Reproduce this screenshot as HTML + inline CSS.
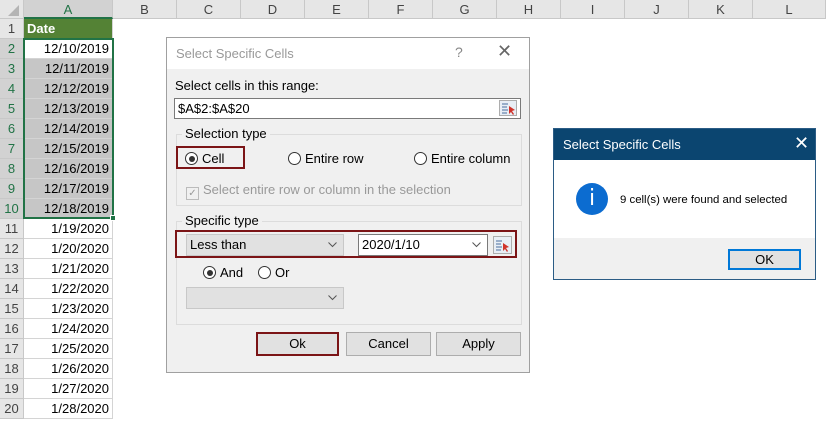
<!DOCTYPE html>
<html><head><style>
*{box-sizing:border-box;margin:0;padding:0}
body{width:826px;height:422px;overflow:hidden;background:#fff;font-family:"Liberation Sans",sans-serif;font-size:13px;position:relative;color:#000}
.a{position:absolute}
.ch{position:absolute;top:0;height:19px;background:#e6e6e6;border-right:1px solid #c8c8c8;border-bottom:1px solid #c8c8c8;text-align:center;line-height:19px;color:#444;font-size:13px}
.rh{position:absolute;left:0;width:24px;height:20px;background:#e6e6e6;border-bottom:1px solid #c8c8c8;border-right:1px solid #c8c8c8;text-align:center;line-height:20px;color:#444}
.cell{position:absolute;left:24px;width:89px;height:20px;border-bottom:1px solid #d4d4d4;border-right:1px solid #d4d4d4;text-align:right;padding-right:3px;line-height:20px}
.btn{position:absolute;background:#e1e1e1;border:1px solid #adadad;text-align:center;font-size:13px}
.rad{display:inline-block;width:13px;height:13px;border:1px solid #333;border-radius:50%;vertical-align:-2px;margin-right:4px;position:relative;background:#fff}
.rad.on::after{content:"";position:absolute;left:2.5px;top:2.5px;width:6px;height:6px;border-radius:50%;background:#333}
.ico{position:absolute;width:18px;height:16px;border:1px solid #adadad;background:#e8eef5}
.chev{position:absolute;right:6px;top:7px}
</style></head><body>
<div class="ch" style="left:0;width:24px"></div>
<div class="a" style="left:8px;top:5px;width:0;height:0;border-left:11px solid transparent;border-bottom:11px solid #b4b4b4"></div>
<div class="ch" style="left:24px;width:89px;background:#d2d2d2;color:#217346;border-bottom:2px solid #217346">A</div>
<div class="ch" style="left:113px;width:64px">B</div>
<div class="ch" style="left:177px;width:64px">C</div>
<div class="ch" style="left:241px;width:64px">D</div>
<div class="ch" style="left:305px;width:64px">E</div>
<div class="ch" style="left:369px;width:64px">F</div>
<div class="ch" style="left:433px;width:64px">G</div>
<div class="ch" style="left:497px;width:64px">H</div>
<div class="ch" style="left:561px;width:64px">I</div>
<div class="ch" style="left:625px;width:64px">J</div>
<div class="ch" style="left:689px;width:64px">K</div>
<div class="ch" style="left:753px;width:73px">L</div>
<div class="rh" style="top:19px">1</div><div class="cell" style="top:19px;background:#548235;color:#fff;font-weight:bold;text-align:left;padding-left:3px">Date</div>
<div class="rh" style="top:39px;background:#d2d2d2;color:#217346">2</div><div class="cell" style="top:39px">12/10/2019</div>
<div class="rh" style="top:59px;background:#d2d2d2;color:#217346">3</div><div class="cell" style="top:59px;background:#c6c6c6">12/11/2019</div>
<div class="rh" style="top:79px;background:#d2d2d2;color:#217346">4</div><div class="cell" style="top:79px;background:#c6c6c6">12/12/2019</div>
<div class="rh" style="top:99px;background:#d2d2d2;color:#217346">5</div><div class="cell" style="top:99px;background:#c6c6c6">12/13/2019</div>
<div class="rh" style="top:119px;background:#d2d2d2;color:#217346">6</div><div class="cell" style="top:119px;background:#c6c6c6">12/14/2019</div>
<div class="rh" style="top:139px;background:#d2d2d2;color:#217346">7</div><div class="cell" style="top:139px;background:#c6c6c6">12/15/2019</div>
<div class="rh" style="top:159px;background:#d2d2d2;color:#217346">8</div><div class="cell" style="top:159px;background:#c6c6c6">12/16/2019</div>
<div class="rh" style="top:179px;background:#d2d2d2;color:#217346">9</div><div class="cell" style="top:179px;background:#c6c6c6">12/17/2019</div>
<div class="rh" style="top:199px;background:#d2d2d2;color:#217346">10</div><div class="cell" style="top:199px;background:#c6c6c6">12/18/2019</div>
<div class="rh" style="top:219px">11</div><div class="cell" style="top:219px">1/19/2020</div>
<div class="rh" style="top:239px">12</div><div class="cell" style="top:239px">1/20/2020</div>
<div class="rh" style="top:259px">13</div><div class="cell" style="top:259px">1/21/2020</div>
<div class="rh" style="top:279px">14</div><div class="cell" style="top:279px">1/22/2020</div>
<div class="rh" style="top:299px">15</div><div class="cell" style="top:299px">1/23/2020</div>
<div class="rh" style="top:319px">16</div><div class="cell" style="top:319px">1/24/2020</div>
<div class="rh" style="top:339px">17</div><div class="cell" style="top:339px">1/25/2020</div>
<div class="rh" style="top:359px">18</div><div class="cell" style="top:359px">1/26/2020</div>
<div class="rh" style="top:379px">19</div><div class="cell" style="top:379px">1/27/2020</div>
<div class="rh" style="top:399px">20</div><div class="cell" style="top:399px">1/28/2020</div>
<div class="a" style="left:23px;top:38px;width:91px;height:181px;border:2px solid #217346"></div>
<div class="a" style="left:110px;top:215px;width:6px;height:6px;background:#217346;border:1px solid #fff"></div>

<div class="a" style="left:166px;top:37px;width:364px;height:336px;background:#f0f0f0;border:1px solid #a0a0a0">
  <div class="a" style="left:0;top:0;width:362px;height:31px;background:#fff;color:#999;line-height:31px;padding-left:9px">Select Specific Cells</div>
  <div class="a" style="left:288px;top:6px;color:#888;font-size:14px">?</div>
  <div class="a" style="left:330px;top:3px;color:#666;font-size:18px">✕</div>
  <div class="a" style="left:8px;top:40px">Select cells in this range:</div>
  <div class="a" style="left:7px;top:60px;width:347px;height:21px;background:#fff;border:1px solid #7a7a7a;line-height:19px;padding-left:3px">$A$2:$A$20</div>
  <svg class="a" style="left:332px;top:62px" width="18" height="16"><rect x=".5" y=".5" width="17" height="15" fill="#e8eef5" stroke="#adadad"/><path d="M3 4h6M3 7h5M3 10h6M3 13h5" stroke="#4a6ea0"/><path d="M10 6l6 4-3 1 2 3-1 1-2-3-2 2z" fill="#d0342c"/></svg>
  <div class="a" style="left:9px;top:96px;width:346px;height:72px;border:1px solid #dcdcdc"></div>
  <div class="a" style="left:15px;top:88px;background:#f0f0f0;padding:0 3px">Selection type</div>
  <div class="a" style="left:9px;top:108px;width:69px;height:23px;border:2px solid #7b1416"></div>
  <div class="a" style="left:18px;top:113px"><span class="rad on"></span>Cell</div>
  <div class="a" style="left:121px;top:113px"><span class="rad"></span>Entire row</div>
  <div class="a" style="left:247px;top:113px"><span class="rad"></span>Entire column</div>
  <div class="a" style="left:19px;top:144px;color:#999"><span style="display:inline-block;width:13px;height:13px;border:1px solid #bbb;vertical-align:-2px;margin-right:4px;font-size:10px;line-height:11px;text-align:center">✓</span>Select entire row or column in the selection</div>
  <div class="a" style="left:9px;top:183px;width:346px;height:104px;border:1px solid #dcdcdc"></div>
  <div class="a" style="left:15px;top:175px;background:#f0f0f0;padding:0 3px">Specific type</div>
  <div class="a" style="left:8px;top:192px;width:342px;height:28px;border:2px solid #7b1416"></div>
  <div class="a" style="left:19px;top:196px;width:158px;height:22px;background:#e1e1e1;border:1px solid #c8c8c8;line-height:20px;padding-left:3px">Less than<svg class="chev" width="9" height="6"><path d="M.5 .5l4 4 4-4" fill="none" stroke="#555"/></svg></div>
  <div class="a" style="left:191px;top:196px;width:130px;height:22px;background:#fff;border:1px solid #7a7a7a;line-height:20px;padding-left:3px">2020/1/10<svg class="chev" width="9" height="6"><path d="M.5 .5l4 4 4-4" fill="none" stroke="#555"/></svg></div>
  <svg class="a" style="left:326px;top:198px" width="19" height="18"><rect x=".5" y=".5" width="18" height="17" fill="#e8eef5" stroke="#adadad"/><path d="M3 5h6M3 8h5M3 11h6M3 14h5" stroke="#4a6ea0"/><path d="M10 7l6 4-3 1 2 3-1 1-2-3-2 2z" fill="#d0342c"/></svg>
  <div class="a" style="left:36px;top:227px"><span class="rad on"></span>And</div>
  <div class="a" style="left:91px;top:227px"><span class="rad"></span>Or</div>
  <div class="a" style="left:19px;top:249px;width:158px;height:22px;background:#e1e1e1;border:1px solid #c8c8c8"><svg class="chev" width="9" height="6"><path d="M.5 .5l4 4 4-4" fill="none" stroke="#555"/></svg></div>
  <div class="btn" style="left:89px;top:294px;width:83px;height:24px;border:2px solid #7b1416;line-height:20px">Ok</div>
  <div class="btn" style="left:179px;top:294px;width:85px;height:24px;line-height:22px">Cancel</div>
  <div class="btn" style="left:269px;top:294px;width:85px;height:24px;line-height:22px">Apply</div>
</div>

<div class="a" style="left:553px;top:128px;width:263px;height:152px;background:#f0f0f0;border:1px solid #2b5c85">
  <div class="a" style="left:0;top:0;width:261px;height:31px;background:#0b4570;color:#fff;line-height:31px;padding-left:9px">Select Specific Cells</div>
  <div class="a" style="left:240px;top:4px;color:#fff;font-size:18px">✕</div>
  <div class="a" style="left:0;top:31px;width:261px;height:78px;background:#fff"></div>
  <div class="a" style="left:22px;top:54px;width:32px;height:32px;border-radius:50%;background:#0c6cd0;color:#fff;text-align:center;line-height:32px;font-size:22px;font-family:'DejaVu Sans',sans-serif">i</div>
  <div class="a" style="left:66px;top:65px;font-size:11.4px">9 cell(s) were found and selected</div>
  <div class="a" style="left:174px;top:120px;width:73px;height:21px;background:#e1e1e1;border:2px solid #0078d7;text-align:center;line-height:17px">OK</div>
</div>
</body></html>
